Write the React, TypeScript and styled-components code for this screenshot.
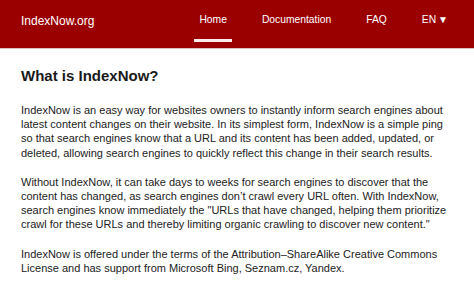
import styled, { createGlobalStyle } from 'styled-components';

const GlobalStyle = createGlobalStyle`
  html, body {
    margin: 0;
    padding: 0;
    background: #ffffff;
  }
  body {
    font-family: 'Liberation Sans', Arial, sans-serif;
    color: #1c1c1c;
  }
`;

const Header = styled.header`
  height: 48px;
  background: #9b0000;
  border-bottom: 1px solid #dcc0c0;
  display: flex;
  align-items: stretch;
  justify-content: space-between;
  padding: 0 21px;
`;

const Logo = styled.a`
  display: flex;
  align-items: center;
  padding-bottom: 7px;
  color: #ffffff;
  font-size: 12px;
  text-decoration: none;
`;

const Nav = styled.nav`
  display: flex;
  align-items: stretch;
  gap: 25px;
`;

const NavItem = styled.a<{ $active?: boolean }>`
  position: relative;
  display: flex;
  align-items: center;
  padding: 0 5px 9px;
  color: #ffffff;
  font-size: 10.3px;
  text-decoration: none;
  &::after {
    content: '';
    display: ${p => (p.$active ? 'block' : 'none')};
    position: absolute;
    left: 0;
    right: 0;
    bottom: 6px;
    height: 3px;
    background: #fbeaea;
  }
`;

const Caret = styled.span`
  font-size: 10px;
  margin-left: 2px;
`;

const Main = styled.main`
  padding: 17px 21px 0;
  width: 432px;
`;

const Title = styled.h1`
  margin: 0 0 17px;
  font-size: 15px;
  font-weight: 600;
  color: #1a1a1a;
  line-height: 20px;
`;

const Paragraph = styled.p`
  margin: 0 0 15px;
  font-size: 11px;
  line-height: 14.2px;
  color: #222222;
`;

export default function App() {
  return (
    <>
      <GlobalStyle />
      <Header>
        <Logo href="#">IndexNow.org</Logo>
        <Nav>
          <NavItem href="#" $active>
            Home
          </NavItem>
          <NavItem href="#">Documentation</NavItem>
          <NavItem href="#">FAQ</NavItem>
          <NavItem href="#">
            EN<Caret>▼</Caret>
          </NavItem>
        </Nav>
      </Header>
      <Main>
        <Title>What is IndexNow?</Title>
        <Paragraph>
          IndexNow is an easy way for websites owners to instantly inform search
          engines about latest content changes on their website. In its simplest
          form, IndexNow is a simple ping so that search engines know that a URL
          and its content has been added, updated, or deleted, allowing search
          engines to quickly reflect this change in their search results.
        </Paragraph>
        <Paragraph>
          Without IndexNow, it can take days to weeks for search engines to
          discover that the content has changed, as search engines don’t crawl
          every URL often. With IndexNow, search engines know immediately the
          "URLs that have changed, helping them prioritize crawl for these URLs
          and thereby limiting organic crawling to discover new content."
        </Paragraph>
        <Paragraph>
          IndexNow is offered under the terms of the Attribution–ShareAlike
          Creative Commons License and has support from Microsoft Bing,
          Seznam.cz, Yandex.
        </Paragraph>
      </Main>
    </>
  );
}
